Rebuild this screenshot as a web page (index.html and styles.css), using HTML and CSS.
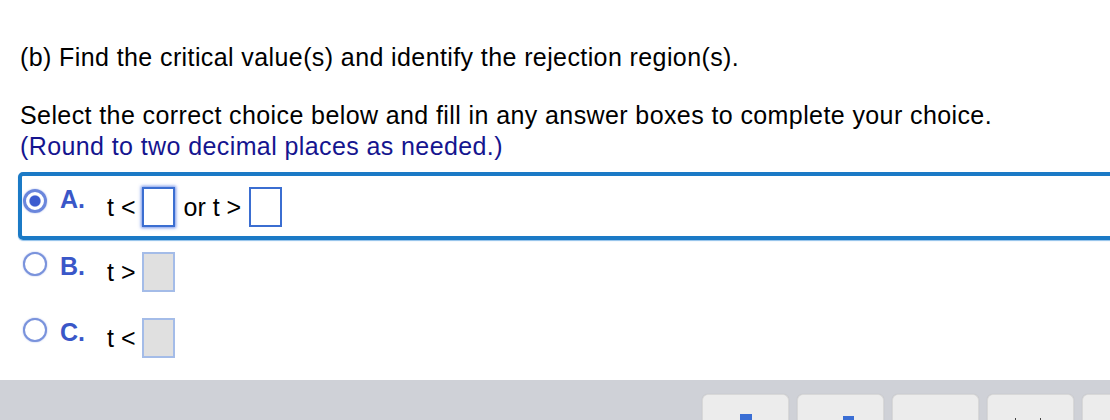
FILE: index.html
```html
<!DOCTYPE html>
<html>
<head>
<meta charset="utf-8">
<link rel="stylesheet" href="styles.css">
</head>
<body>
<div class="page">
  <div class="question">
    <p class="line part">(b) Find the critical value(s) and identify the rejection region(s).</p>
    <p class="line instr">Select the correct choice below and fill in any answer boxes to complete your choice.</p>
    <p class="line hint">(Round to two decimal places as needed.)</p>
  </div>
  <div class="choices">
    <div class="choice selected">
      <div class="row">
        <span class="radio on"></span>
        <span class="letter">A.</span>
        <span class="expr">
          <span class="txt">t &lt;</span>
          <span class="box active focus"></span>
          <span class="txt mid">or t &gt;</span>
          <span class="box active"></span>
        </span>
      </div>
    </div>
    <div class="choice plain b">
      <div class="row">
        <span class="radio"></span>
        <span class="letter">B.</span>
        <span class="expr">
          <span class="txt">t &gt;</span>
          <span class="box off"></span>
        </span>
      </div>
    </div>
    <div class="choice plain c">
      <div class="row">
        <span class="radio"></span>
        <span class="letter">C.</span>
        <span class="expr">
          <span class="txt">t &lt;</span>
          <span class="box off"></span>
        </span>
      </div>
    </div>
  </div>
  <div class="toolbar">
    <div class="tbtn"><span class="ico blue1"></span></div>
    <div class="tbtn"><span class="ico blue2"></span></div>
    <div class="tbtn"></div>
    <div class="tbtn"><span class="ico dark"></span></div>
    <div class="tbtn last"></div>
  </div>
</div>
</body>
</html>
```
FILE: styles.css
```css
html, body {
  margin: 0;
  padding: 0;
  background: #ffffff;
}
.page {
  width: 1110px;
  height: 420px;
  overflow: hidden;
  display: flex;
  flex-direction: column;
  font-family: "Liberation Sans", Arial, sans-serif;
  font-size: 25px;
  color: #000;
}
.question {
  padding: 42px 0 0 20px;
}
.line {
  margin: 0;
  line-height: 31px;
  white-space: nowrap;
  letter-spacing: 0.4px;
}
.instr {
  margin-top: 27px;
}
.hint {
  color: #15158f;
}
.choices {
  margin-left: 18px;
  margin-top: 10px;
  display: flex;
  flex-direction: column;
}
.choice {
  box-sizing: border-box;
  width: 1110px;
}
.choice.selected {
  border: 4px solid #1b7ac6;
  border-radius: 5px;
  padding: 11px 0 9px 1px;
  box-shadow: 0 1px 1px rgba(70, 150, 220, 0.6);
}
.choice.plain {
  padding-left: 5px;
}
.choice.b {
  margin-top: 12px;
}
.choice.c {
  margin-top: 26px;
}
.row {
  display: flex;
  align-items: flex-start;
  height: 40px;
}
.radio {
  flex: none;
  box-sizing: border-box;
  width: 24px;
  height: 24px;
  border-radius: 50%;
  border: 2px solid #7a93dc;
  box-shadow: 0 0 1.5px rgba(90, 120, 215, 0.7);
  background: #fff;
}
.selected .radio {
  margin-top: 2px;
}
.radio.on {
  border: 3px solid #6a86dc;
  background: radial-gradient(circle, #3b5bcf 0, #3b5bcf 5px, #ffffff 6.2px);
}
.letter {
  flex: none;
  margin-left: 13px;
  font-weight: bold;
  color: #3a57c8;
  line-height: 28px;
  width: 47px;
}
.selected .letter {
  line-height: 24px;
}
.expr {
  display: flex;
  align-items: center;
  height: 40px;
}
.txt {
  line-height: 40px;
  white-space: nowrap;
}
.txt.mid {
  margin-left: 9px;
}
.box {
  flex: none;
  box-sizing: border-box;
  width: 33px;
  height: 40px;
  margin-left: 6px;
}
.box.active {
  border: 2px solid #3b6ed1;
  background: #fff;
}
.box.active.focus {
  box-shadow: 0 0 3px 1px rgba(70, 110, 225, 0.75);
}
.txt.mid + .box {
  margin-left: 8px;
}
.box.off {
  border: 2px solid #a4bce8;
  background: #e0e0e0;
}
.toolbar {
  margin-top: auto;
  height: 40px;
  background: #cfd1d7;
  display: flex;
  gap: 8px;
  padding: 14px 0 0 702px;
  box-sizing: border-box;
}
.tbtn {
  flex: none;
  width: 87px;
  height: 40px;
  box-sizing: border-box;
  background: #ececec;
  border: 1px solid #d8d8d8;
  border-bottom: none;
  border-radius: 6px 6px 0 0;
  box-shadow: 0 0 1px rgba(0, 0, 0, 0.15);
  display: flex;
  align-items: flex-start;
}
.tbtn.last {
  width: 60px;
}
.ico {
  display: block;
}
.ico.blue1 {
  width: 12px;
  height: 10px;
  margin: 19px 0 0 37px;
  background: #3a6ed4;
}
.ico.blue2 {
  width: 11px;
  height: 10px;
  margin: 21px 0 0 45px;
  background: #3a6ed4;
}
.ico.dark {
  width: 24px;
  height: 6px;
  margin: 23px 0 0 27px;
  border-left: 1px solid #444;
  border-right: 1px solid #444;
}
```
